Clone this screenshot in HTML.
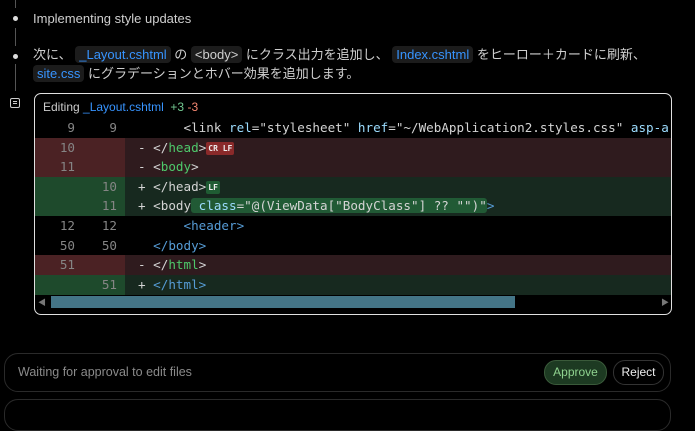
<!DOCTYPE html>
<html><head><meta charset="utf-8"><style>
html,body{margin:0;padding:0;background:#000;width:695px;height:413px;overflow:hidden;font-family:"Liberation Sans","Noto Sans CJK JP",sans-serif;color:#ccc;}
.abs{position:absolute}
.vl{position:absolute;left:15px;width:1px;background:#555}
.dot{position:absolute;left:13px;width:5px;height:5px;border-radius:50%;background:#ddd}
.t{font-size:13px;color:#cfcfcf;position:absolute;left:33px;white-space:nowrap}
.chip{background:#1c1c1c;border-radius:4px;padding:1px 4px}
.lnk{color:#3794ff}
.box{position:absolute;left:34px;top:93px;width:636px;height:220px;border:1px solid #e0e0e0;border-radius:7px;overflow:hidden;background:#000}
.row{position:absolute;left:0;width:636px;height:20px;font-family:"DejaVu Sans Mono","Liberation Mono",monospace;font-size:12.6px;line-height:20px;white-space:pre;color:#d4d4d4}
.g{position:absolute;left:0;top:0;width:90px;height:20px}
.n1{position:absolute;left:0;width:40px;text-align:right;color:#858585}
.n2{position:absolute;left:44px;width:38px;text-align:right;color:#858585}
.c{position:absolute;left:103px}
.del{background:#2f1b1e}.del .g{background:#4b2224}
.add{background:#17291f}.add .g{background:#1e4a2c}
.tag{color:#569cd6}.tg{color:#4ec96b}.at{color:#9cdcfe}
.crlf{font-size:8px;font-weight:bold;padding:2px 2px;border-radius:2px;color:#eee;vertical-align:middle}
</style></head><body>
<div class="vl" style="top:0;height:8px"></div>
<div class="dot" style="top:16px"></div>
<div class="vl" style="top:28px;height:18px"></div>
<div class="dot" style="top:54px"></div>
<div class="vl" style="top:64px;height:27px"></div>
<div class="abs" style="left:10px;top:98px;width:8px;height:8px;border:1px solid #ccc;border-radius:2px"><div class="abs" style="left:2px;top:2px;width:4px;height:1px;background:#ccc"></div><div class="abs" style="left:2px;top:4px;width:4px;height:1px;background:#ccc"></div></div>
<div class="t" style="top:11px">Implementing style updates</div>
<div class="t" style="top:44px">次に、 <span class="chip lnk">_Layout.cshtml</span> の <span class="chip">&lt;body&gt;</span> にクラス出力を追加し、 <span class="chip lnk">Index.cshtml</span> をヒーロー＋カードに刷新、</div>
<div class="t" style="top:63px"><span class="chip lnk">site.css</span> にグラデーションとホバー効果を追加します。</div>
<div class="box">
<div class="abs" style="left:8px;top:6px;font-size:12px;color:#ccc">Editing <span class="lnk">_Layout.cshtml</span> &nbsp;<span style="color:#73c991">+3</span> <span style="color:#f48771">-3</span></div>
<div class="row" style="top:24px"><div class="g"></div><span class="n1">9</span><span class="n2">9</span><span class="c">      &lt;link <span class="at">rel</span>="stylesheet" <span class="at">href</span>="~/WebApplication2.styles.css" <span class="at">asp-a</span></span></div>
<div class="row del" style="top:44px"><div class="g"></div><span class="n1">10</span><span class="c">- &lt;/<span class="tg">head</span>&gt;<span class="crlf" style="background:#8a2a2a">CR LF</span></span></div>
<div class="row del" style="top:63px"><div class="g"></div><span class="n1">11</span><span class="c">- &lt;<span class="tg">body</span>&gt;</span></div>
<div class="row add" style="top:83px"><div class="g"></div><span class="n2">10</span><span class="c">+ &lt;/head&gt;<span class="crlf" style="background:#1f5c33">LF</span></span></div>
<div class="row add" style="top:102px"><div class="g"></div><span class="n2">11</span><span class="c">+ &lt;body<span style="background:#215a35;border-radius:3px"> <span class="at">class</span>="@(ViewData["BodyClass"] ?? "")"</span><span class="tag">&gt;</span></span></div>
<div class="row" style="top:122px"><span class="n1">12</span><span class="n2">12</span><span class="c">      <span class="tag">&lt;header&gt;</span></span></div>
<div class="row" style="top:142px"><span class="n1">50</span><span class="n2">50</span><span class="c">  <span class="tag">&lt;/body&gt;</span></span></div>
<div class="row del" style="top:161px"><div class="g"></div><span class="n1">51</span><span class="c">- &lt;/<span class="tg">html</span>&gt;</span></div>
<div class="row add" style="top:181px"><div class="g"></div><span class="n2">51</span><span class="c">+ <span class="tag">&lt;/html&gt;</span></span></div>
<div class="abs" style="left:3px;top:203px;font-size:8px;color:#777">◀</div>
<div class="abs" style="left:16px;top:202px;width:464px;height:12px;background:#447587"></div>
<div class="abs" style="left:626px;top:203px;font-size:8px;color:#777">▶</div>
</div>
<div class="abs" style="left:4px;top:353px;width:665px;height:37px;border:1px solid #2a2a2a;border-radius:14px"></div>
<div class="abs" style="left:18px;top:365px;font-size:12.5px;color:#8a8a8a">Waiting for approval to edit files</div>
<div class="abs" style="left:544px;top:360px;width:61px;height:23px;border:1px solid #3a5a3a;background:#1d3a22;border-radius:12px;color:#8fd28f;font-size:12px;line-height:23px;text-align:center">Approve</div>
<div class="abs" style="left:613px;top:360px;width:49px;height:23px;border:1px solid #333;border-radius:12px;color:#eee;font-size:12px;line-height:23px;text-align:center">Reject</div>
<div class="abs" style="left:4px;top:399px;width:665px;height:30px;border:1px solid #2a2a2a;border-radius:14px"></div>
</body></html>
